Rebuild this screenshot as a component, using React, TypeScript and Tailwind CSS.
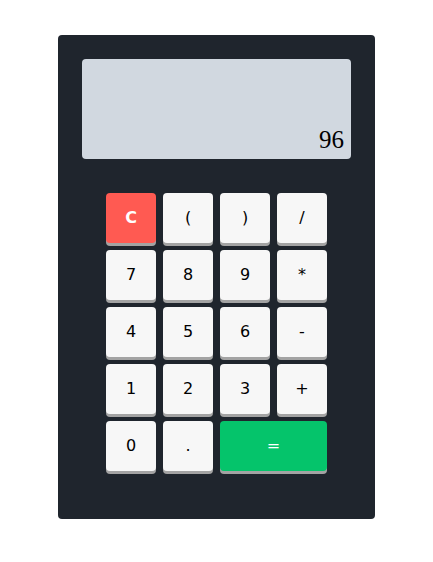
const keys = [
  { label: 'C', kind: 'clear' },
  { label: '(' },
  { label: ')' },
  { label: '/' },
  { label: '7' },
  { label: '8' },
  { label: '9' },
  { label: '*' },
  { label: '4' },
  { label: '5' },
  { label: '6' },
  { label: '-' },
  { label: '1' },
  { label: '2' },
  { label: '3' },
  { label: '+' },
  { label: '0' },
  { label: '.' },
  { label: '=', kind: 'equals' },
];

export default function App() {
  return (
    <div className="flex justify-center bg-white pt-[35px] min-h-[562px]">
      <div className="w-[317px] h-[484px] rounded-[4px] bg-[#1f252d] pt-6 px-6">
        <div className="flex h-[100px] items-end justify-end rounded-[4px] bg-[#d1d8e0] px-[7px] pb-[4px]">
          <span className="text-[25px] leading-[30px] text-black" style={{ fontFamily: '"Liberation Serif", serif' }}>
            96
          </span>
        </div>
        <div className="mx-auto mt-[34px] grid w-[221px] grid-cols-4 gap-x-[7px] gap-y-[7px]">
          {keys.map((k) => (
            <button
              key={k.label}
              type="button"
              className={
                'h-[50px] rounded-[4px] text-[16px] shadow-[0_3px_0_#a3a3a3] ' +
                (k.kind === 'clear'
                  ? 'bg-[#ff5a52] font-bold text-white'
                  : k.kind === 'equals'
                  ? 'col-span-2 bg-[#05c46b] text-white'
                  : 'bg-[#f7f7f7] text-black')
              }
              style={{ fontFamily: '"DejaVu Sans", Verdana, sans-serif' }}
            >
              {k.label}
            </button>
          ))}
        </div>
      </div>
    </div>
  );
}
